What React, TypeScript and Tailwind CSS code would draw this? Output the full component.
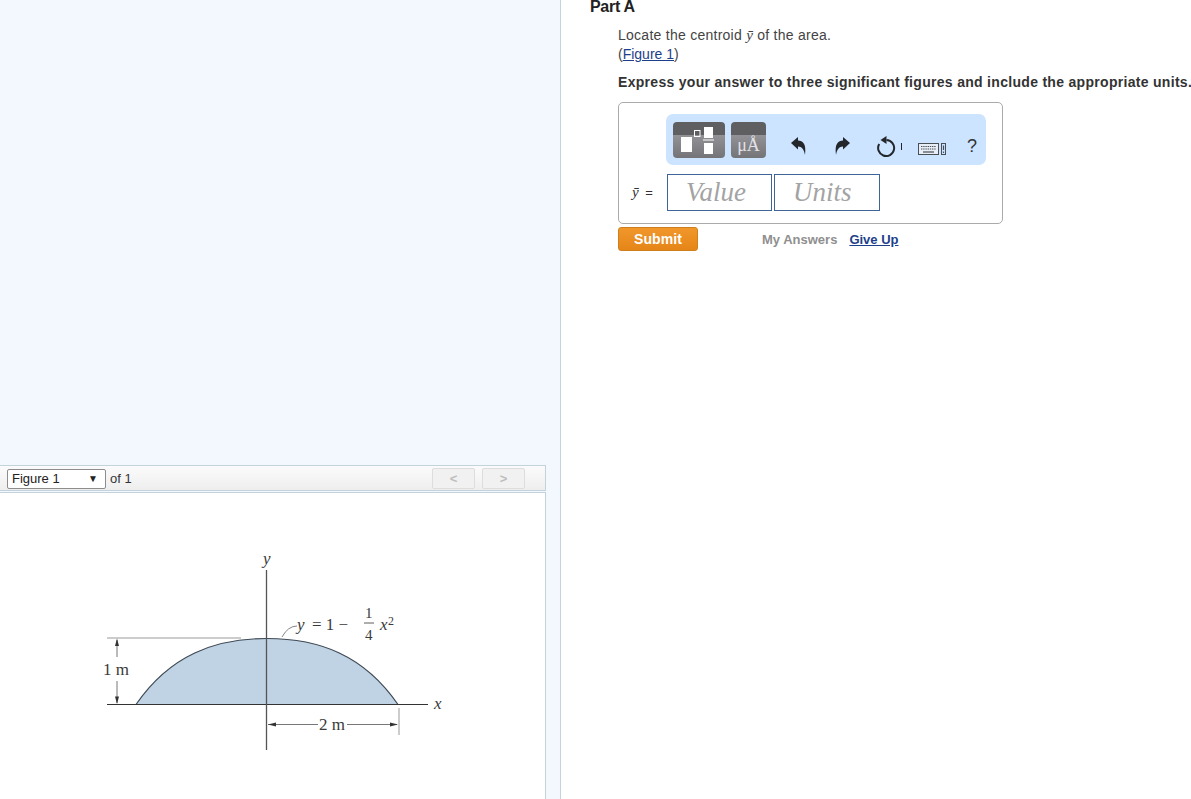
export default function App() {
  return (
    <div className="flex h-[799px] w-[1191px] overflow-hidden bg-white font-['Liberation_Sans',Arial,sans-serif]">
      <div className="flex w-[561px] shrink-0 flex-col border-r border-[#c3d3e0] bg-[#f3f8fe] pr-[14px]">
        <div className="h-[465px] shrink-0" />
        <div className="flex h-[26px] shrink-0 items-center border-y border-r border-[#c4d2dc] bg-[linear-gradient(#fbfbfb,#eeeeee)] pl-[7px] pt-[1px]">
          <div className="flex h-[20px] w-[99px] items-center justify-between rounded-[2px] border border-[#8d8d8d] bg-white pl-[4px] pr-[7px] text-[13px] text-[#222]">
            <span>Figure 1</span>
            <span className="text-[10px] text-[#222]">▼</span>
          </div>
          <span className="ml-[4px] text-[13px] text-[#333]">of 1</span>
          <div className="ml-auto mr-[20px] flex gap-[7px]">
            <div className="flex h-[21px] w-[43px] items-center justify-center rounded-[2px] border border-[#dddddd] bg-[#f1f1f1] text-[13px] font-bold text-[#bdbdbd]">&lt;</div>
            <div className="flex h-[21px] w-[43px] items-center justify-center rounded-[2px] border border-[#dddddd] bg-[#f1f1f1] text-[13px] font-bold text-[#bdbdbd]">&gt;</div>
          </div>
        </div>
        <div className="mt-[1px] flex-1 border-r border-t border-[#c4d2dc] bg-white">
          <svg width="545" height="307" viewBox="0 493 545 307" className="block">
            <path d="M136 704.5 C170 655 215 638.5 267 638.5 C319 638.5 364 655 398 704.5 Z" fill="#c0d3e4" stroke="none" />
            <path d="M136 704.5 C170 655 215 638.5 267 638.5 C319 638.5 364 655 398 704.5" fill="none" stroke="#3f4a55" strokeWidth="1.2" />
            <path d="M107 704.5 H428" stroke="#333" strokeWidth="1.2" />
            <path d="M266.5 570 V750" stroke="#555" strokeWidth="1.3" />
            <path d="M107 638 H241" stroke="#999" strokeWidth="1" />
            <path d="M117 640 V657 M117 681 V703" stroke="#777" strokeWidth="1" />
            <path d="M117 638.5 L115 646 H119 Z M117 704 L115 696.5 H119 Z" fill="#333" />
            <path d="M268 724.5 H318 M347 724.5 H397" stroke="#777" strokeWidth="1" />
            <path d="M268 724.5 L276 722.5 V726.5 Z M398 724.5 L390 722.5 V726.5 Z" fill="#333" />
            <path d="M399 708 V735" stroke="#999" strokeWidth="1" />
            <path d="M282 637 Q288 626 297 626" fill="none" stroke="#666" strokeWidth="0.8" />
            <g fontFamily="'Liberation Serif',serif" fill="#3a3a3a" fontSize="17">
              <text x="263" y="564" fontStyle="italic">y</text>
              <text x="297" y="630" fontStyle="italic">y</text>
              <text x="312" y="630">= 1 −</text>
              <text x="365" y="618" fontSize="15">1</text>
              <path d="M364 623 H374" stroke="#333" strokeWidth="0.8" />
              <text x="365" y="640" fontSize="15">4</text>
              <text x="380" y="630" fontStyle="italic">x</text>
              <text x="388" y="625" fontSize="12">2</text>
              <text x="103" y="675">1 m</text>
              <text x="319" y="730">2 m</text>
              <text x="434" y="709" fontStyle="italic">x</text>
            </g>
          </svg>
        </div>
      </div>

      <div className="min-w-0 flex-1 whitespace-nowrap pl-[29px]">
        <div className="h-[12px] text-[16px] font-bold leading-[14px] tracking-[-0.3px] text-[#222]">Part A</div>
        <div className="pl-[28px]">
          <div className="mt-[13px] h-[20px] text-[14px] leading-[20px] tracking-[0.26px] text-[#444]">
            Locate the centroid <span className="font-['Liberation_Serif',serif] text-[15px] italic">ȳ</span> of the area.
          </div>
          <div className="h-[18px] text-[14px] leading-[18px] text-[#444]">
            (<span className="text-[#1d3f8a] underline">Figure 1</span>)
          </div>
          <div className="mt-[10px] h-[18px] text-[14px] font-bold leading-[18px] tracking-[0.3px] text-[#333]">
            Express your answer to three significant figures and include the appropriate units.
          </div>
          <div className="mt-[11px] h-[122px] w-[385px] rounded-[5px] border border-[#aaaaaa] pl-[47px] pt-[11px]">
            <div className="flex h-[51px] w-[320px] items-center rounded-[7px] bg-[#cce4ff] pl-[7px] pt-[1px]">
              <div className="h-[36px] w-[52px] overflow-hidden rounded-[4px] bg-[linear-gradient(#5f5f62_0,#5f5f62_36%,#919196_37%,#747478_100%)]">
                <svg width="52" height="36" viewBox="0 0 52 36" className="block">
                  <rect x="8" y="15" width="11" height="15" fill="#fff" />
                  <rect x="21.5" y="8.5" width="5.5" height="6" fill="none" stroke="#fff" strokeWidth="1" />
                  <rect x="31" y="5" width="9" height="11" fill="#fff" />
                  <rect x="30" y="17.5" width="11" height="1" fill="#fff" />
                  <rect x="31" y="21" width="9" height="11" fill="#fff" />
                </svg>
              </div>
              <div className="ml-[6px] flex h-[36px] w-[35px] items-end justify-center overflow-hidden rounded-[4px] bg-[linear-gradient(#5f5f62_0,#5f5f62_36%,#919196_37%,#747478_100%)] pb-[3px] font-['Liberation_Serif',serif] text-[18px] leading-[20px] text-[#e2e2e6]">
                μÅ
              </div>
              <svg width="18" height="20" viewBox="0 0 18 20" className="ml-[24px] mt-[11px] block text-[#23272b]">
                <path d="M1 7 L8 1 V4.5 C13 4.5 16.5 8 15 19 C14 13.5 12 10.5 8 10.5 V13.5 Z" fill="currentColor" />
              </svg>
              <svg width="18" height="20" viewBox="0 0 18 20" className="ml-[25px] mt-[11px] block text-[#23272b]">
                <path d="M17 7 L10 1 V4.5 C5 4.5 1.5 8 3 19 C4 13.5 6 10.5 10 10.5 V13.5 Z" fill="currentColor" />
              </svg>
              <svg width="20" height="22" viewBox="0 0 20 22" className="ml-[25px] mt-[12px] block text-[#23272b]">
                <path d="M10.5 5 A8 8 0 1 1 3.2 9" fill="none" stroke="currentColor" strokeWidth="2" />
                <path d="M10.5 1 V9 L4.5 5 Z" fill="currentColor" />
              </svg>
              <div className="ml-[5px] mt-[12px] h-[7px] w-[1px] bg-[#23272b]" />
              <svg width="28" height="14" viewBox="0 0 28 14" className="ml-[16px] mt-[17px] block text-[#4a4f55]">
                <rect x="0.5" y="1.5" width="20" height="11" fill="#e8eef5" stroke="currentColor" />
                <path d="M3 4.5 H18 M3 7 H18" stroke="currentColor" strokeWidth="1.2" strokeDasharray="1.4 0.8" />
                <path d="M5 10 H16" stroke="currentColor" strokeWidth="1.2" />
                <rect x="23.5" y="1.5" width="4" height="11" fill="none" stroke="currentColor" />
                <path d="M25.5 3.5 V8 M25.5 9.5 V11" stroke="currentColor" strokeWidth="1.2" />
              </svg>
              <span className="ml-[21px] mt-[11px] text-[18px] leading-[20px] text-[#333]">?</span>
            </div>
            <div className="-ml-[34px] mt-[9px] flex items-center">
              <div className="w-[35px] text-[13px] text-[#333]">
                <span className="mr-[3px] font-['Liberation_Serif',serif] text-[15px] italic">ȳ</span> =
              </div>
              <div className="flex h-[37px] w-[105px] items-center border border-[#3f6498] pl-[18px] font-['Liberation_Serif',serif] text-[27px] italic text-[#a3a3a3]">Value</div>
              <div className="ml-[2px] flex h-[37px] w-[106px] items-center border border-[#3f6498] pl-[18px] font-['Liberation_Serif',serif] text-[27px] italic text-[#a3a3a3]">Units</div>
            </div>
          </div>
          <div className="mt-[3px] flex h-[24px] items-center">
            <div className="flex h-[24px] w-[80px] items-center justify-center rounded-[3px] border border-[#d07f1e] bg-[linear-gradient(#f0972c,#e68518)] text-[14px] font-bold tracking-[0.1px] text-white">Submit</div>
            <span className="ml-[64px] pt-[1px] text-[13px] font-bold text-[#8f8f8f]">My Answers</span>
            <span className="ml-[12px] pt-[1px] text-[13px] font-bold text-[#1d3f8a] underline">Give Up</span>
          </div>
        </div>
      </div>
    </div>
  );
}
